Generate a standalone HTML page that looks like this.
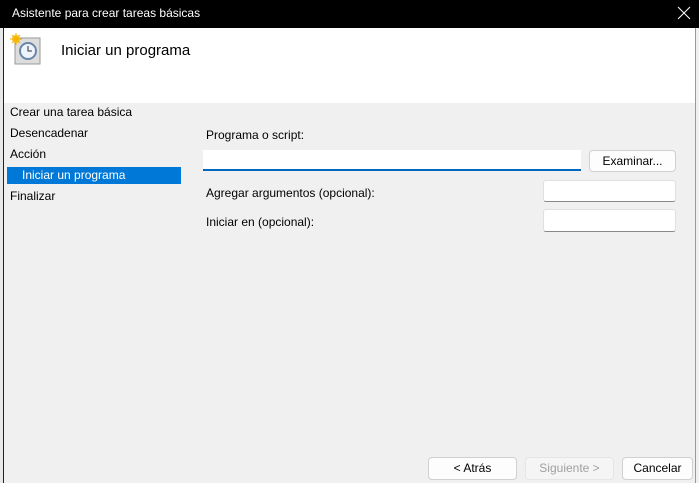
<!DOCTYPE html><html><head><style>
body{margin:0;width:699px;height:483px;overflow:hidden;background:#f0f0f0;font-family:"Segoe UI","Liberation Sans",sans-serif;font-size:12px;color:#000;position:relative}
.a{position:absolute}
.btn{position:absolute;background:#fdfdfd;border:1px solid #d0d0d0;border-radius:4px;box-sizing:border-box;text-align:center;line-height:20px;font-size:12px}
.inp{position:absolute;background:#fff;border:1px solid #e0e0e0;border-bottom:1px solid #888;box-sizing:border-box;border-radius:3px}
</style></head><body>
<div class="a" style="left:0;top:0;width:699px;height:28px;background:#000"></div>
<div class="a" style="left:12px;top:6px;color:#fff;font-size:12px">Asistente para crear tareas básicas</div>
<svg class="a" style="left:677px;top:6px" width="14" height="14"><path d="M1 1L13 13M13 1L1 13" stroke="#fff" stroke-width="1"/></svg>
<div class="a" style="left:3px;top:28px;width:692px;height:75px;background:#fff"></div>
<div class="a" style="left:0;top:28px;width:3px;height:455px;background:#e8e8e8"></div>
<div class="a" style="left:3px;top:28px;width:1px;height:455px;background:#222"></div>
<div class="a" style="left:695px;top:28px;width:4px;height:455px;background:#f0f0f0;border-left:1px solid #999"></div>
<svg class="a" style="left:10px;top:33px" width="32" height="34"><rect x="5" y="5" width="25" height="26" fill="#ddd" stroke="#999"/><circle cx="18" cy="18" r="8" fill="#eef4fb" stroke="#6b86a8" stroke-width="2"/><path d="M18 13v5h4" stroke="#333" fill="none"/><circle cx="6" cy="6" r="4" fill="#f5c518"/><path d="M6 0v12M0 6h12M2 2l8 8M10 2l-8 8" stroke="#f5b000" stroke-width="1"/></svg>
<div class="a" style="left:61px;top:42px;font-size:15px">Iniciar un programa</div>
<div class="a" style="left:10px;top:105px">Crear una tarea básica</div>
<div class="a" style="left:10px;top:126px">Desencadenar</div>
<div class="a" style="left:10px;top:147px">Acción</div>
<div class="a" style="left:7px;top:167px;width:174px;height:17px;background:#0078d7"></div>
<div class="a" style="left:22px;top:168px;color:#fff">Iniciar un programa</div>
<div class="a" style="left:10px;top:189px">Finalizar</div>
<div class="a" style="left:206px;top:128px">Programa o script:</div>
<div class="a" style="left:203px;top:150px;width:378px;height:21px;background:#fff;border-bottom:2px solid #0067c0;box-sizing:border-box"></div>
<div class="btn" style="left:589px;top:150px;width:87px;height:22px">Examinar...</div>
<div class="a" style="left:206px;top:186px">Agregar argumentos (opcional):</div>
<div class="inp" style="left:543px;top:180px;width:133px;height:22px"></div>
<div class="a" style="left:206px;top:215px">Iniciar en (opcional):</div>
<div class="inp" style="left:543px;top:209px;width:133px;height:23px"></div>
<div class="btn" style="left:428px;top:457px;width:89px;height:23px">&lt; Atrás</div>
<div class="btn" style="left:525px;top:457px;width:89px;height:23px;background:#f5f5f5;color:#a0a0a0;border-color:#e5e5e5">Siguiente &gt;</div>
<div class="btn" style="left:622px;top:457px;width:71px;height:23px">Cancelar</div>
</body></html>
